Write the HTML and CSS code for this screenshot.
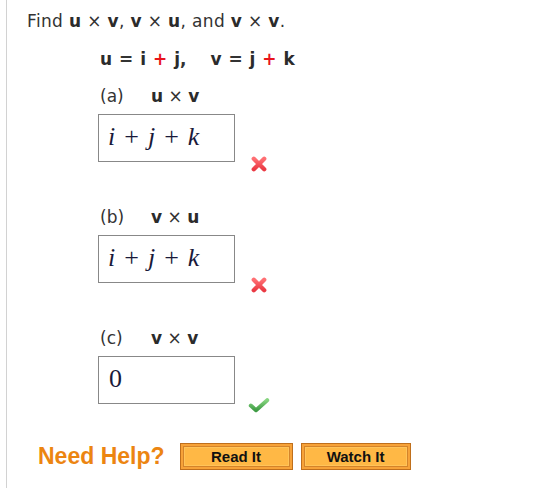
FILE: index.html
```html
<!DOCTYPE html>
<html>
<head>
<meta charset="utf-8">
<link rel="stylesheet" href="styles.css">
</head>
<body>
<div class="page">
  <p class="prompt">Find <b>u</b> × <b>v</b>, <b>v</b> × <b>u</b>, and <b>v</b> × <b>v</b>.</p>
  <div class="indent">
    <p class="given"><b>u</b> = <b>i</b> <span class="plus">+</span> <b>j</b>,<span class="sp"></span><b>v</b> = <b>j</b> <span class="plus">+</span> <b>k</b></p>

    <div class="part first">
      <div class="label"><span class="tag">(a)</span><span class="expr"><b>u</b> × <b>v</b></span></div>
      <div class="row">
        <div class="box"><span class="math"><i>i</i><span class="op">+</span><i>j</i><span class="op">+</span><i>k</i></span></div>
        <svg class="mark" viewBox="0 0 18 18" width="18" height="18"><defs><linearGradient id="rg" x1="0" y1="0" x2="0" y2="1"><stop offset="0" stop-color="#ff6f73"/><stop offset="1" stop-color="#ea3a44"/></linearGradient></defs><path d="M3.8 3.8L14.2 14.2M14.2 3.8L3.8 14.2" stroke="url(#rg)" stroke-width="4.4" stroke-linecap="round"/></svg>
      </div>
    </div>

    <div class="part">
      <div class="label"><span class="tag">(b)</span><span class="expr"><b>v</b> × <b>u</b></span></div>
      <div class="row">
        <div class="box"><span class="math"><i>i</i><span class="op">+</span><i>j</i><span class="op">+</span><i>k</i></span></div>
        <svg class="mark" viewBox="0 0 18 18" width="18" height="18"><path d="M3.8 3.8L14.2 14.2M14.2 3.8L3.8 14.2" stroke="url(#rg)" stroke-width="4.4" stroke-linecap="round"/></svg>
      </div>
    </div>

    <div class="part">
      <div class="label"><span class="tag">(c)</span><span class="expr"><b>v</b> × <b>v</b></span></div>
      <div class="row">
        <div class="box"><span class="math"><span class="zero">0</span></span></div>
        <svg class="mark check" viewBox="0 0 22 16" width="22" height="16"><defs><linearGradient id="gg" x1="0" y1="0" x2="0" y2="1"><stop offset="0" stop-color="#86d47f"/><stop offset="1" stop-color="#3f9c45"/></linearGradient></defs><path d="M2.8 8.6L8 13.2L19.2 3.2" fill="none" stroke="url(#gg)" stroke-width="4" stroke-linecap="round" stroke-linejoin="round"/></svg>
      </div>
    </div>
  </div>

  <div class="help">
    <span class="need">Need Help?</span>
    <span class="btn">Read It</span>
    <span class="btn">Watch It</span>
  </div>
</div>
</body>
</html>
```
FILE: styles.css
```css
html, body {
  margin: 0;
  padding: 0;
  background: #fff;
}
.page {
  margin-left: 6px;
  border-left: 1px solid #d2d2d2;
  min-height: 488px;
  padding: 11px 0 0 20px;
  box-sizing: border-box;
  font-family: "DejaVu Sans", Verdana, sans-serif;
  font-size: 17px;
  color: #333;
}
p { margin: 0; }
b { color: #2b2b2b; }
.prompt {
  line-height: 20px;
  letter-spacing: 0.35px;
}
.indent {
  padding-left: 73px;
}
.given {
  margin-top: 18px;
  line-height: 20px;
  font-weight: bold;
  word-spacing: 1px;
}
.plus {
  color: #e8131b;
  font-weight: bold;
}
.sp {
  display: inline-block;
  width: 24px;
}
.part {
  margin-top: 45px;
}
.part.first {
  margin-top: 17px;
}
.label {
  display: flex;
  line-height: 20px;
}
.tag {
  width: 51px;
}
.row {
  display: flex;
  align-items: flex-end;
  margin-top: 8px;
}
.box {
  width: 137px;
  height: 48px;
  box-sizing: border-box;
  border: 1px solid #888;
  margin-left: -2px;
  display: flex;
  align-items: center;
  padding-left: 9px;
  padding-bottom: 2px;
}
.math {
  font-family: "Liberation Serif", "Times New Roman", serif;
  font-size: 26px;
  color: #1a1a3a;
  white-space: nowrap;
}
.math i { font-style: italic; }
.op {
  margin: 0 9px;
}
.zero {
  padding-left: 1px;
}
.mark {
  margin-left: 15px;
  margin-bottom: -11px;
}
.check {
  margin-left: 13px;
  margin-bottom: -9px;
}
.help {
  display: flex;
  align-items: center;
  margin-top: 39px;
  margin-left: 11px;
}
.need {
  font-family: "Liberation Sans", Arial, sans-serif;
  font-weight: bold;
  font-size: 23px;
  color: #ec8511;
  margin-right: 15px;
}
.btn {
  display: inline-block;
  width: 113px;
  height: 27px;
  box-sizing: border-box;
  border: 1px solid #bf6f1c;
  background: #ffb845;
  box-shadow: inset 0 0 0 2px #f7a238, inset 0 0 0 3px #d4842a, inset 0 0 0 4px #ffc45a;
  font-family: "Liberation Sans", Arial, sans-serif;
  font-weight: bold;
  font-size: 15px;
  color: #111;
  text-align: center;
  line-height: 26px;
  margin-right: 8px;
}
.btn + .btn { width: 110px; }
```
